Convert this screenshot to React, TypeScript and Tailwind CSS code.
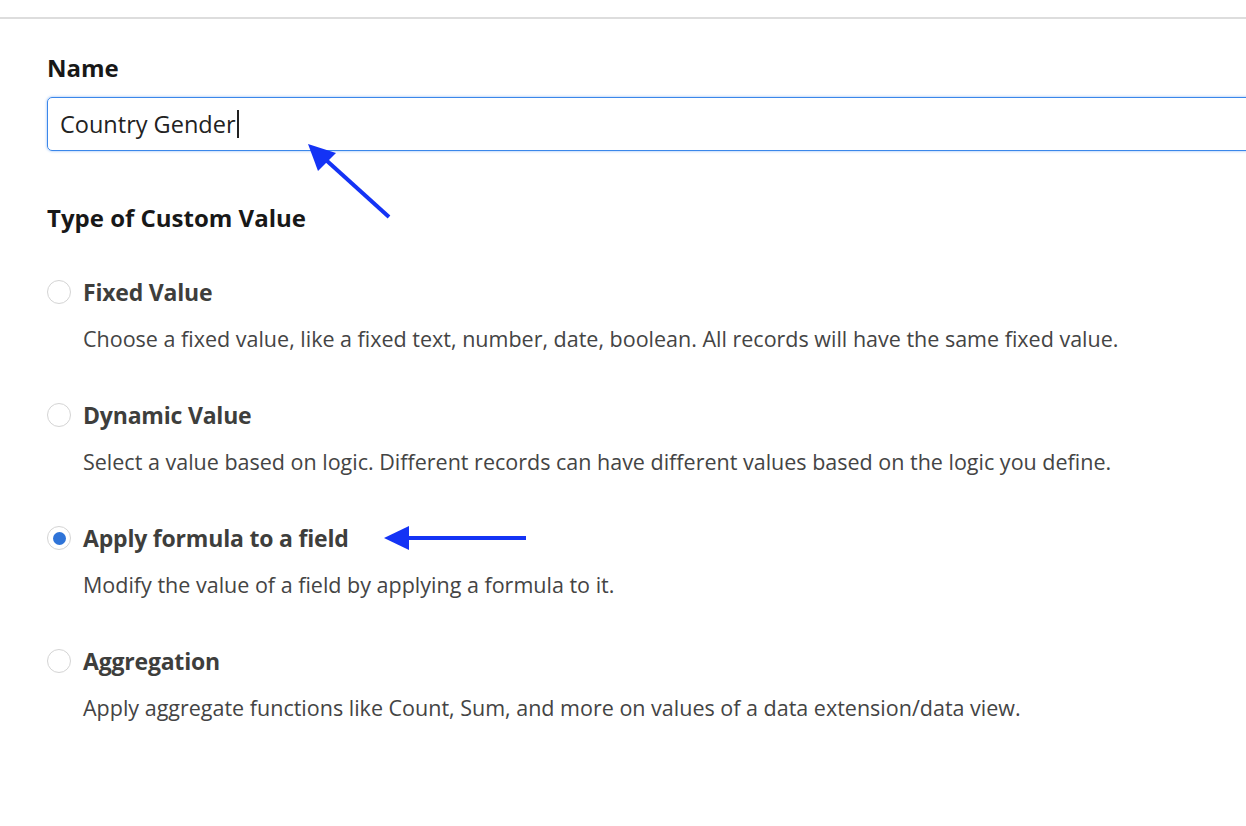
import React from "react";

type Option = {
  label: string;
  description: string;
  selected?: boolean;
};

const options: Option[] = [
  {
    label: "Fixed Value",
    description:
      "Choose a fixed value, like a fixed text, number, date, boolean. All records will have the same fixed value.",
  },
  {
    label: "Dynamic Value",
    description:
      "Select a value based on logic. Different records can have different values based on the logic you define.",
  },
  {
    label: "Apply formula to a field",
    description: "Modify the value of a field by applying a formula to it.",
    selected: true,
  },
  {
    label: "Aggregation",
    description:
      "Apply aggregate functions like Count, Sum, and more on values of a data extension/data view.",
  },
];

function Radio({ selected }: { selected?: boolean }) {
  return (
    <span className="flex h-[24px] w-[24px] shrink-0 items-center justify-center rounded-full border border-[#d4d4d4] bg-white">
      {selected && <span className="h-[13px] w-[13px] rounded-full bg-[#2f74d8]" />}
    </span>
  );
}

function Annotations() {
  return (
    <svg
      className="pointer-events-none absolute left-0 top-0"
      width="1246"
      height="826"
      viewBox="0 0 1246 826"
    >
      <line x1="389" y1="217" x2="326" y2="160" stroke="#1433f5" strokeWidth="4" />
      <polygon points="308,144 318,171 336,153" fill="#1433f5" />
      <line x1="526" y1="538" x2="405" y2="538" stroke="#1433f5" strokeWidth="4" />
      <polygon points="384,538 409,526 409,550" fill="#1433f5" />
    </svg>
  );
}

export default function App() {
  return (
    <div
      className="relative h-[826px] w-[1246px] overflow-hidden bg-white"
      style={{ fontFamily: '"Open Sans", "Liberation Sans", sans-serif' }}
    >
      <div className="mt-[17px] border-t-2 border-[#dddddd]" />

      <div className="pl-[47px]">
        <div className="mt-[34px] text-[24px] font-bold leading-[30px] text-[#181818]">Name</div>

        <div className="mt-[14px] flex h-[54px] w-[1240px] items-center rounded-[5px] border border-[#3b87ea] pl-[12px] shadow-[0_0_3px_#8fb8f2]">
          <span className="text-[23.5px] leading-[30px] text-[#222222]">Country Gender</span>
          <span className="ml-[1px] h-[28px] w-[2px] bg-[#222222]" />
        </div>

        <div className="mt-[52px] text-[24px] font-bold leading-[30px] text-[#181818]">
          Type of Custom Value
        </div>

        <div className="mt-[44px] flex flex-col gap-[46px]">
          {options.map((o) => (
            <div key={o.label}>
              <div className="flex items-center gap-[12px]">
                <Radio selected={o.selected} />
                <span className="text-[23px] font-bold leading-[30px] tracking-[-0.2px] text-[#3e3e3c]">
                  {o.label}
                </span>
              </div>
              <div className="mt-[17px] pl-[36px] text-[21.5px] leading-[30px] text-[#444444]">
                {o.description}
              </div>
            </div>
          ))}
        </div>
      </div>

      <Annotations />
    </div>
  );
}
